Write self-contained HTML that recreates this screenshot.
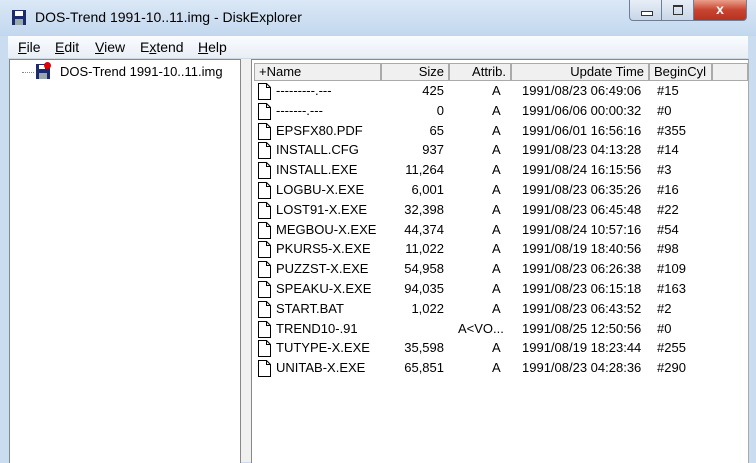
<!DOCTYPE html><html><head><style>
body{margin:0;width:756px;height:462px;overflow:hidden;background:#c9dcf0;font-family:"Liberation Sans",sans-serif;position:relative}
.t{position:absolute;left:0;top:0;width:756px;height:36px;background:linear-gradient(#dbe8f6,#c2d7ee)}
.title{position:absolute;left:35px;top:9px;font-size:14px;color:#000}
.btn{position:absolute;top:0;height:20px;border:1px solid #6d7f96;border-top:none}
.menu{position:absolute;left:8px;top:36px;width:740px;height:22px;background:linear-gradient(#fafcfe,#e8eef6);border-bottom:1px solid #d0d8e2}
.menu span{position:absolute;top:3px;font-size:14px}
.left{position:absolute;left:9px;top:59px;width:230px;height:403px;background:#fff;border:1px solid #888;border-bottom:none}
.split{position:absolute;left:241px;top:59px;width:10px;height:403px;background:#f0f0f0}
.right{position:absolute;left:251px;top:59px;width:496px;height:403px;background:#fff;border:1px solid #888;border-right:1px solid #aaa;border-bottom:none}
.hd{position:absolute;top:3px;height:18px;background:#f0f0f0;border:1px solid #aaa;box-sizing:border-box;font-size:13px;line-height:16px;padding:0 4px}
.r{position:absolute;left:0;width:496px;height:20px;font-size:13px;line-height:20px}
.r span{position:absolute}
.ic{position:absolute;left:6px;top:2px}
</style></head><body>
<div class="t"></div>
<div style="position:absolute;left:12px;top:10px;width:14px;height:15px;background:#1c2a6e"><div style="position:absolute;left:3px;top:1px;width:8px;height:5px;background:#fff"></div><div style="position:absolute;left:3px;top:9px;width:8px;height:6px;background:#9aa"></div></div>
<div class="title">DOS-Trend 1991-10..11.img - DiskExplorer</div>
<div class="btn" style="left:629px;width:31px;background:linear-gradient(#e8eef6,#c8d6e8);border-radius:0 0 0 4px"><div style="position:absolute;left:11px;top:11px;width:10px;height:3px;border:1px solid #333;background:#fff"></div></div>
<div class="btn" style="left:661px;width:31px;background:linear-gradient(#e8eef6,#c8d6e8)"><div style="position:absolute;left:11px;top:5px;width:8px;height:7px;border:1px solid #333;border-top-width:2px"></div></div>
<div class="btn" style="left:693px;width:52px;background:linear-gradient(#e9a08c,#c84430 50%,#b83220);border-radius:0 0 4px 0;color:#fff;font-weight:bold;text-align:center;font-size:14px;line-height:18px">x</div>
<div class="menu"><span style="left:10px"><u>F</u>ile</span><span style="left:47px"><u>E</u>dit</span><span style="left:87px"><u>V</u>iew</span><span style="left:132px">E<u>x</u>tend</span><span style="left:190px"><u>H</u>elp</span></div>
<div class="left">
<div style="position:absolute;left:12px;top:12px;width:12px;border-top:1px dotted #888"></div>
<div style="position:absolute;left:26px;top:4px;width:14px;height:15px;background:#1c2a6e"><div style="position:absolute;left:3px;top:1px;width:6px;height:4px;background:#fff"></div><div style="position:absolute;left:8px;top:-2px;width:7px;height:7px;background:#d00;border-radius:50%"></div><div style="position:absolute;left:3px;top:9px;width:8px;height:6px;background:#9aa"></div></div>
<div style="position:absolute;left:50px;top:4px;font-size:13px">DOS-Trend 1991-10..11.img</div>
</div>
<div class="split"></div>
<div class="right">
<div class="hd" style="left:2px;width:127px">+Name</div>
<div class="hd" style="left:129px;width:68px;text-align:right">Size</div>
<div class="hd" style="left:197px;width:62px;text-align:right">Attrib.</div>
<div class="hd" style="left:259px;width:138px;text-align:right">Update Time</div>
<div class="hd" style="left:397px;width:63px">BeginCyl</div>
<div class="hd" style="left:460px;width:36px"></div>
<div id="rows"></div>
</div>
<script>
var d=[["---------.---","425","A","1991/08/23 06:49:06","#15"],["-------.---","0","A","1991/06/06 00:00:32","#0"],["EPSFX80.PDF","65","A","1991/06/01 16:56:16","#355"],["INSTALL.CFG","937","A","1991/08/23 04:13:28","#14"],["INSTALL.EXE","11,264","A","1991/08/24 16:15:56","#3"],["LOGBU-X.EXE","6,001","A","1991/08/23 06:35:26","#16"],["LOST91-X.EXE","32,398","A","1991/08/23 06:45:48","#22"],["MEGBOU-X.EXE","44,374","A","1991/08/24 10:57:16","#54"],["PKURS5-X.EXE","11,022","A","1991/08/19 18:40:56","#98"],["PUZZST-X.EXE","54,958","A","1991/08/23 06:26:38","#109"],["SPEAKU-X.EXE","94,035","A","1991/08/23 06:15:18","#163"],["START.BAT","1,022","A","1991/08/23 06:43:52","#2"],["TREND10-.91","","A&lt;VO...","1991/08/25 12:50:56","#0"],["TUTYPE-X.EXE","35,598","A","1991/08/19 18:23:44","#255"],["UNITAB-X.EXE","65,851","A","1991/08/23 04:28:36","#290"]];
var ic='<svg class="ic" width="13" height="17"><path d="M0.5 0.5H8.5L12.5 4.5V16.5H0.5Z" fill="#fff" stroke="#000"/><path d="M8.5 0.5V4.5H12.5" fill="none" stroke="#000"/></svg>';
var h="";d.forEach(function(r,i){var a=r[2]=="A"?'<span style="left:240px">A</span>':'<span style="left:206px">'+r[2]+'</span>';
h+='<div class="r" style="top:'+(21+i*19.8)+'px">'+ic+'<span style="left:24px">'+r[0]+'</span><span style="right:304px">'+r[1]+'</span>'+a+'<span style="left:270px">'+r[3]+'</span><span style="left:405px">'+r[4]+'</span></div>'});
document.getElementById("rows").innerHTML=h;
</script>
</body></html>
